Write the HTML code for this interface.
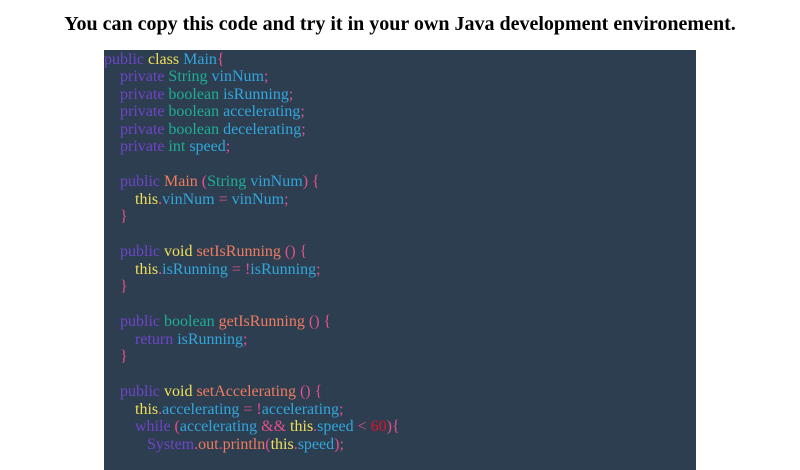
<!DOCTYPE html>
<html><head><style>
html,body{margin:0;padding:0;background:#fff;width:800px;height:450px;overflow:hidden}
h1{font-family:"Liberation Serif",serif;font-weight:bold;font-size:20px;text-align:center;margin:0;position:absolute;top:12px;left:0;width:800px;line-height:24px;color:#000}
.code{position:absolute;left:104px;top:50px;width:592px;height:420px;background:#2c3e50;font-family:"Liberation Serif",serif;font-size:16px;line-height:17.5px}
.l{height:17.5px;white-space:pre}
.k{color:#6f45c8}.y{color:#f1e05a}.b{color:#33a6dc}.t{color:#1fad96}.p{color:#e5508a}.m{color:#f07b5f}.r{color:#e0102a}
</style></head><body>
<h1>You can copy this code and try it in your own Java development environement.</h1>
<div class="code" style="padding-top:0">
<div style="height:0.5px"></div>
<div class="l"><span class="k">public</span> <span class="y">class</span> <span class="b">Main</span><span class="p">{</span></div>
<div class="l" style="padding-left:16px"><span class="k">private</span> <span class="t">String</span> <span class="b">vinNum</span><span class="p">;</span></div>
<div class="l" style="padding-left:16px"><span class="k">private</span> <span class="t">boolean</span> <span class="b">isRunning</span><span class="p">;</span></div>
<div class="l" style="padding-left:16px"><span class="k">private</span> <span class="t">boolean</span> <span class="b">accelerating</span><span class="p">;</span></div>
<div class="l" style="padding-left:16px"><span class="k">private</span> <span class="t">boolean</span> <span class="b">decelerating</span><span class="p">;</span></div>
<div class="l" style="padding-left:16px"><span class="k">private</span> <span class="t">int</span> <span class="b">speed</span><span class="p">;</span></div>
<div class="l"></div>
<div class="l" style="padding-left:16px"><span class="k">public</span> <span class="m">Main</span> <span class="p">(</span><span class="t">String</span> <span class="b">vinNum</span><span class="p">) {</span></div>
<div class="l" style="padding-left:31px"><span class="y">this</span><span class="p">.</span><span class="b">vinNum</span> <span class="p">=</span> <span class="b">vinNum</span><span class="p">;</span></div>
<div class="l" style="padding-left:16px"><span class="p">}</span></div>
<div class="l"></div>
<div class="l" style="padding-left:16px"><span class="k">public</span> <span class="y">void</span> <span class="m">setIsRunning</span> <span class="p">() {</span></div>
<div class="l" style="padding-left:31px"><span class="y">this</span><span class="p">.</span><span class="b">isRunning</span> <span class="p">= !</span><span class="b">isRunning</span><span class="p">;</span></div>
<div class="l" style="padding-left:16px"><span class="p">}</span></div>
<div class="l"></div>
<div class="l" style="padding-left:16px"><span class="k">public</span> <span class="t">boolean</span> <span class="m">getIsRunning</span> <span class="p">() {</span></div>
<div class="l" style="padding-left:31px"><span class="k">return</span> <span class="b">isRunning</span><span class="p">;</span></div>
<div class="l" style="padding-left:16px"><span class="p">}</span></div>
<div class="l"></div>
<div class="l" style="padding-left:16px"><span class="k">public</span> <span class="y">void</span> <span class="m">setAccelerating</span> <span class="p">() {</span></div>
<div class="l" style="padding-left:31px"><span class="y">this</span><span class="p">.</span><span class="b">accelerating</span> <span class="p">= !</span><span class="b">accelerating</span><span class="p">;</span></div>
<div class="l" style="padding-left:31px"><span class="k">while</span> <span class="p">(</span><span class="b">accelerating</span> <span class="p">&amp;&amp;</span> <span class="y">this</span><span class="p">.</span><span class="b">speed</span> <span class="p">&lt;</span> <span class="r">60</span><span class="p">){</span></div>
<div class="l" style="padding-left:43px"><span class="k">System</span><span class="p">.</span><span class="m">out</span><span class="p">.</span><span class="m">println</span><span class="p">(</span><span class="y">this</span><span class="p">.</span><span class="b">speed</span><span class="p">);</span></div>
</div>
</body></html>
